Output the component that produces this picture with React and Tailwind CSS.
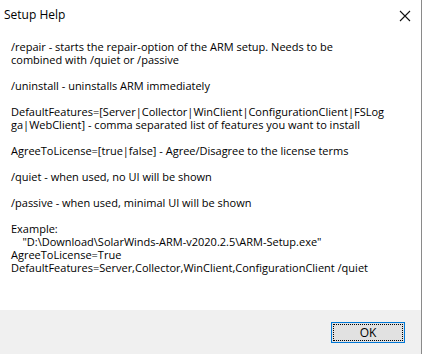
export default function App() {
  const lines = [
    "/repair - starts the repair-option of the ARM setup. Needs to be",
    "combined with /quiet or /passive",
    "",
    "/uninstall - uninstalls ARM immediately",
    "",
    "DefaultFeatures=[Server|Collector|WinClient|ConfigurationClient|FSLog",
    "ga|WebClient] - comma separated list of features you want to install",
    "",
    "AgreeToLicense=[true|false] - Agree/Disagree to the license terms",
    "",
    "/quiet - when used, no UI will be shown",
    "",
    "/passive - when used, minimal UI will be shown",
    "",
    "Example:",
    "    \"D:\\Download\\SolarWinds-ARM-v2020.2.5\\ARM-Setup.exe\"",
    "AgreeToLicense=True",
    "DefaultFeatures=Server,Collector,WinClient,ConfigurationClient /quiet",
  ];
  return (
    <div className="w-[423px] h-[354px] flex bg-white" style={{ fontFamily: '"Open Sans", "Noto Sans", sans-serif' }}>
      <div className="w-[421px] h-full flex flex-col bg-white">
        <div className="h-[30px] flex items-center justify-between pl-[4px] pr-[10px] text-[12px] text-black">
          <span>Setup Help</span>
          <svg width="12" height="12" viewBox="0 0 12 12" className="mt-[1px]">
            <path d="M1 1 L11 11 M11 1 L1 11" stroke="#111" strokeWidth="1.1" fill="none" />
          </svg>
        </div>
        <div className="flex-1 pt-[10px] pl-[11px] text-[11px] leading-[13px] text-black">
          {lines.map((l, i) => (
            <div key={i} className="h-[13px] whitespace-pre">{l}</div>
          ))}
        </div>
        <div className="h-[44px] bg-[#f0f0f0] flex items-start justify-end pr-[16px] pt-[12px]">
          <div className="w-[74px] h-[21px] border border-[#0078d7] bg-[#e1e1e1] p-[1px]">
            <div className="w-full h-full border border-dotted border-black flex items-center justify-center text-[12px] text-black">OK</div>
          </div>
        </div>
      </div>
      <div className="w-[1px] h-full bg-[#8a8a8a]" />
      <div className="w-[1px] h-full bg-white" />
    </div>
  );
}
